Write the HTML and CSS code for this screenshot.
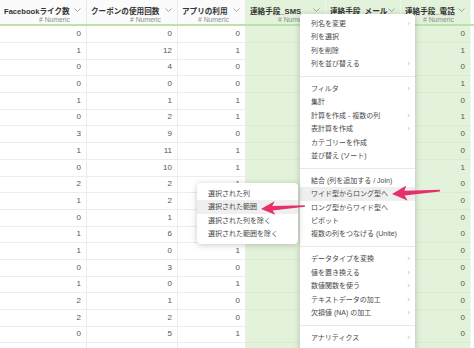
FILE: index.html
```html
<!DOCTYPE html>
<html>
<head>
    <meta charset="utf-8">
    <title>Data Table</title>
    <link rel="stylesheet" href="styles.css">
</head>
<body>
    <div class="sheet">
        <div class="row head">
            <div class="hcell"><div class="title"><span>Facebookライク数</span><svg class="chev" viewBox="0 0 7 4"><polyline points="0.5,0.5 3.5,3.5 6.5,0.5"/></svg></div><div class="type"># Numeric</div></div>
            <div class="hcell"><div class="title"><span>クーポンの使用回数</span><svg class="chev" viewBox="0 0 7 4"><polyline points="0.5,0.5 3.5,3.5 6.5,0.5"/></svg></div><div class="type"># Numeric</div></div>
            <div class="hcell"><div class="title"><span>アプリの利用</span><svg class="chev" viewBox="0 0 7 4"><polyline points="0.5,0.5 3.5,3.5 6.5,0.5"/></svg></div><div class="type"># Numeric</div></div>
            <div class="hcell sel"><div class="title"><span>連絡手段_SMS</span><svg class="chev" viewBox="0 0 7 4"><polyline points="0.5,0.5 3.5,3.5 6.5,0.5"/></svg></div><div class="type"># Numeric</div></div>
            <div class="hcell sel"><div class="title"><span>連絡手段_メール</span><svg class="chev" viewBox="0 0 7 4"><polyline points="0.5,0.5 3.5,3.5 6.5,0.5"/></svg></div><div class="type"># Numeric</div></div>
            <div class="hcell sel"><div class="title"><span>連絡手段_電話</span><svg class="chev" viewBox="0 0 7 4"><polyline points="0.5,0.5 3.5,3.5 6.5,0.5"/></svg></div><div class="type"># Numeric</div></div>
        </div>
        <div class="row"><div class="cell">0</div><div class="cell">0</div><div class="cell">0</div><div class="cell sel"></div><div class="cell sel"></div><div class="cell sel">0</div></div>
        <div class="row"><div class="cell">1</div><div class="cell">12</div><div class="cell">1</div><div class="cell sel"></div><div class="cell sel"></div><div class="cell sel">1</div></div>
        <div class="row"><div class="cell">0</div><div class="cell">4</div><div class="cell">0</div><div class="cell sel"></div><div class="cell sel"></div><div class="cell sel">0</div></div>
        <div class="row"><div class="cell">0</div><div class="cell">0</div><div class="cell">0</div><div class="cell sel"></div><div class="cell sel"></div><div class="cell sel">1</div></div>
        <div class="row"><div class="cell">1</div><div class="cell">1</div><div class="cell">1</div><div class="cell sel"></div><div class="cell sel"></div><div class="cell sel">0</div></div>
        <div class="row"><div class="cell">0</div><div class="cell">2</div><div class="cell">1</div><div class="cell sel"></div><div class="cell sel"></div><div class="cell sel">1</div></div>
        <div class="row"><div class="cell">3</div><div class="cell">9</div><div class="cell">0</div><div class="cell sel"></div><div class="cell sel"></div><div class="cell sel">0</div></div>
        <div class="row"><div class="cell">1</div><div class="cell">11</div><div class="cell">1</div><div class="cell sel"></div><div class="cell sel"></div><div class="cell sel">0</div></div>
        <div class="row"><div class="cell">0</div><div class="cell">10</div><div class="cell">1</div><div class="cell sel"></div><div class="cell sel"></div><div class="cell sel">1</div></div>
        <div class="row"><div class="cell">2</div><div class="cell">2</div><div class="cell">1</div><div class="cell sel"></div><div class="cell sel"></div><div class="cell sel">0</div></div>
        <div class="row"><div class="cell">1</div><div class="cell">2</div><div class="cell"></div><div class="cell sel"></div><div class="cell sel"></div><div class="cell sel">0</div></div>
        <div class="row"><div class="cell">0</div><div class="cell">1</div><div class="cell"></div><div class="cell sel"></div><div class="cell sel"></div><div class="cell sel">0</div></div>
        <div class="row"><div class="cell">1</div><div class="cell">6</div><div class="cell"></div><div class="cell sel"></div><div class="cell sel"></div><div class="cell sel">0</div></div>
        <div class="row"><div class="cell">1</div><div class="cell">0</div><div class="cell">1</div><div class="cell sel"></div><div class="cell sel"></div><div class="cell sel">0</div></div>
        <div class="row"><div class="cell">0</div><div class="cell">3</div><div class="cell">0</div><div class="cell sel"></div><div class="cell sel"></div><div class="cell sel">0</div></div>
        <div class="row"><div class="cell">1</div><div class="cell">0</div><div class="cell">1</div><div class="cell sel"></div><div class="cell sel"></div><div class="cell sel">0</div></div>
        <div class="row"><div class="cell">2</div><div class="cell">1</div><div class="cell">0</div><div class="cell sel"></div><div class="cell sel"></div><div class="cell sel">0</div></div>
        <div class="row"><div class="cell">2</div><div class="cell">2</div><div class="cell">0</div><div class="cell sel"></div><div class="cell sel"></div><div class="cell sel">0</div></div>
        <div class="row"><div class="cell">0</div><div class="cell">5</div><div class="cell">1</div><div class="cell sel"></div><div class="cell sel"></div><div class="cell sel">0</div></div>
        <div class="row"><div class="cell"></div><div class="cell"></div><div class="cell"></div><div class="cell sel"></div><div class="cell sel"></div><div class="cell sel"></div></div>
    </div>

    <div class="menu">
        <div class="item"><span>列名を変更</span><span class="more">›</span></div>
        <div class="item"><span>列を選択</span></div>
        <div class="item"><span>列を削除</span></div>
        <div class="item"><span>列を並び替える</span><span class="more">›</span></div>
        <div class="sep"></div>
        <div class="item"><span>フィルタ</span><span class="more">›</span></div>
        <div class="item"><span>集計</span></div>
        <div class="item"><span>計算を作成 - 複数の列</span><span class="more">›</span></div>
        <div class="item"><span>表計算を作成</span><span class="more">›</span></div>
        <div class="item"><span>カテゴリーを作成</span></div>
        <div class="item"><span>並び替え (ソート)</span></div>
        <div class="sep"></div>
        <div class="item"><span>結合 (列を追加する / Join)</span></div>
        <div class="item on"><span>ワイド型からロング型へ</span></div>
        <div class="item"><span>ロング型からワイド型へ</span></div>
        <div class="item"><span>ピボット</span></div>
        <div class="item"><span>複数の列をつなげる (Unite)</span></div>
        <div class="sep"></div>
        <div class="item"><span>データタイプを変換</span><span class="more">›</span></div>
        <div class="item"><span>値を置き換える</span><span class="more">›</span></div>
        <div class="item"><span>数値関数を使う</span><span class="more">›</span></div>
        <div class="item"><span>テキストデータの加工</span><span class="more">›</span></div>
        <div class="item"><span>欠損値 (NA) の加工</span><span class="more">›</span></div>
        <div class="sep"></div>
        <div class="item"><span>アナリティクス</span><span class="more">›</span></div>
    </div>

    <div class="submenu">
        <div class="item"><span>選択された列</span></div>
        <div class="item on"><span>選択された範囲</span></div>
        <div class="item"><span>選択された列を除く</span></div>
        <div class="item"><span>選択された範囲を除く</span></div>
    </div>

    <svg class="arrows" viewBox="0 0 474 348">
        <path transform="translate(392 194) rotate(-4)" d="M0,0 L15,-7.5 L12.5,-2.4 L48,-0.8 L48,0.8 L12.5,2.4 L15,7.5 Z"/>
        <path transform="translate(261 209) rotate(-4)" d="M0,0 L14,-6.8 L11.5,-2.2 L44,-0.8 L44,0.8 L11.5,2.2 L14,6.8 Z"/>
    </svg>
</body>
</html>
```

FILE: styles.css
```css
body {
    margin: 0;
    width: 474px;
    height: 348px;
    overflow: hidden;
    position: relative;
    background: #fff;
    font-family: "Liberation Sans", "Noto Sans CJK JP", sans-serif;
}
.sheet {
    width: 474px;
}
.row {
    display: grid;
    grid-template-columns: 87px 91px 68px 80px 75px 70px;
    height: 16.7px;
}
.row.head {
    height: 26px;
    border-bottom: 2px solid #b9e3a8;
    box-sizing: border-box;
}
.hcell {
    background: #fbfbfb;
    border-right: 1px solid #ebebeb;
    padding: 5px 0 0 4px;
    box-sizing: border-box;
    overflow: hidden;
}
.hcell.sel {
    background: #e3f2db;
    border-right-color: #eef7ea;
}
.title {
    display: flex;
    justify-content: space-between;
    align-items: center;
    padding-right: 5px;
    height: 10px;
    font-size: 7.6px;
    font-weight: bold;
    color: #333;
    white-space: nowrap;
}
.chev {
    width: 7px;
    height: 4px;
    flex: none;
}
.chev polyline {
    fill: none;
    stroke: #9a9a9a;
    stroke-width: 0.9;
}
.type {
    text-align: right;
    padding-right: 16px;
    margin-top: 1px;
    font-size: 6.8px;
    line-height: 8px;
    color: #8c8c8c;
}
.cell {
    border-right: 1px solid #ececec;
    border-bottom: 1px solid #ececec;
    box-sizing: border-box;
    text-align: right;
    padding-right: 5px;
    font-size: 8px;
    line-height: 16px;
    color: #555;
}
.cell.sel {
    background: #e3f2db;
    border-right-color: #eef7ea;
    border-bottom-color: #d9ecd1;
}
.menu, .submenu {
    position: absolute;
    background: #fff;
    border-radius: 4px;
    box-shadow: 0 1px 6px rgba(0,0,0,0.22);
    font-size: 7px;
    color: #4a4a4a;
}
.menu {
    left: 300px;
    top: 14px;
    width: 115px;
    height: 345px;
    padding: 3px 0;
}
.submenu {
    left: 197px;
    top: 183px;
    width: 101px;
    padding: 4px 0 3px;
}
.item {
    display: flex;
    justify-content: space-between;
    height: 13.4px;
    line-height: 13.4px;
    padding: 0 5px 0 11px;
    white-space: nowrap;
}
.item.on {
    background: #efefef;
}
.more {
    color: #c0c0c0;
    font-size: 8px;
}
.sep {
    border-top: 1px solid #e8e8e8;
    margin: 5.25px 0;
}
.arrows {
    position: absolute;
    left: 0;
    top: 0;
    width: 474px;
    height: 348px;
    fill: #e5316b;
}
```
